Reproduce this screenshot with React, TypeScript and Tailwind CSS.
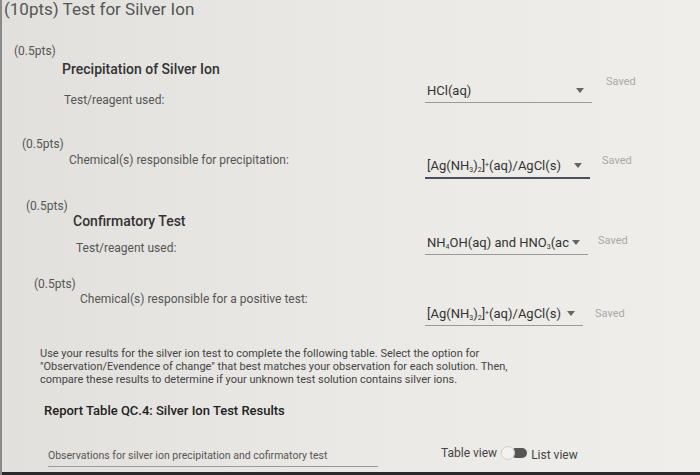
import React from 'react';

const Caret = () => (
  <svg width="8" height="5" viewBox="0 0 8 5" className="shrink-0">
    <path d="M0 0h8L4 5z" fill="#666" />
  </svg>
);

type DropProps = {
  children: React.ReactNode;
  width: string;
  strong?: boolean;
};

const Dropdown = ({ children, width, strong }: DropProps) => (
  <div
    className={`${width} flex items-center justify-between pl-[2px] pr-[8px] pb-[3px] ${
      strong ? 'border-b-2 border-[#4b4f58]' : 'border-b border-[#9a9a9a]'
    }`}
  >
    <span className="text-[13px] leading-[17px] text-[#333] whitespace-nowrap">{children}</span>
    <Caret />
  </div>
);

const Saved = ({ cls }: { cls: string }) => (
  <span className={`text-[11px] leading-[13px] text-[#a9a9a9] ${cls}`}>Saved</span>
);

const AgComplex = () => (
  <>
    [Ag(NH<sub className="text-[7px]">3</sub>)<sub className="text-[7px]">2</sub>]
    <sup className="text-[7px]">+</sup>(aq)/AgCl(s)
  </>
);

const App: React.FC = () => {
  return (
    <div
      className="w-[700px] h-[475px] overflow-hidden relative bg-linear-to-r from-[#e1e0dc] via-[#eae9e5] to-[#efeeea] border-l-2 border-[#8a8a8a] text-[#444]"
      style={{ fontFamily: 'Roboto, "Liberation Sans", sans-serif' }}
    >
      <h1 className="text-[17px] leading-[18px] text-[#555] pl-[2px]">(10pts) Test for Silver Ion</h1>

      {/* block 1 */}
      <div className="flex items-start mt-[26px]">
        <div className="w-[423px] shrink-0 pl-[12px]">
          <div className="text-[12px] leading-[14px] text-[#555]">(0.5pts)</div>
          <div className="ml-[48px] mt-[2px] text-[14px] leading-[18px] font-medium text-[#333]">
            Precipitation of Silver Ion
          </div>
          <div className="ml-[50px] mt-[15px] text-[12px] leading-[14px] text-[#555]">Test/reagent used:</div>
        </div>
        <div className="mt-[38px]">
          <Dropdown width="w-[167px]">HCl(aq)</Dropdown>
        </div>
        <Saved cls="ml-[14px] mt-[31px]" />
      </div>

      {/* block 2 */}
      <div className="flex items-start mt-[30px]">
        <div className="w-[423px] shrink-0 pl-[20px]">
          <div className="text-[12px] leading-[14px] text-[#555]">(0.5pts)</div>
          <div className="ml-[47px] mt-[2px] text-[12px] leading-[14px] text-[#555]">
            Chemical(s) responsible for precipitation:
          </div>
        </div>
        <div className="mt-[20px]">
          <Dropdown width="w-[165px]" strong>
            <AgComplex />
          </Dropdown>
        </div>
        <Saved cls="ml-[12px] mt-[17px]" />
      </div>

      {/* block 3 */}
      <div className="flex items-start mt-[20px]">
        <div className="w-[423px] shrink-0 pl-[24px]">
          <div className="text-[12px] leading-[14px] text-[#555]">(0.5pts)</div>
          <div className="ml-[47px] mt-[-1px] text-[14px] leading-[18px] font-medium text-[#333]">Confirmatory Test</div>
          <div className="ml-[50px] mt-[11px] text-[12px] leading-[14px] text-[#555]">Test/reagent used:</div>
        </div>
        <div className="mt-[35px]">
          <Dropdown width="w-[163px]">
            NH<sub className="text-[7px]">4</sub>OH(aq) and HNO<sub className="text-[7px]">3</sub>(ac
          </Dropdown>
        </div>
        <Saved cls="ml-[10px] mt-[35px]" />
      </div>

      {/* block 4 */}
      <div className="flex items-start mt-[22px]">
        <div className="w-[423px] shrink-0 pl-[32px]">
          <div className="text-[12px] leading-[14px] text-[#555]">(0.5pts)</div>
          <div className="ml-[46px] mt-[1px] text-[12px] leading-[14px] text-[#555]">
            Chemical(s) responsible for a positive test:
          </div>
        </div>
        <div className="mt-[28px]">
          <Dropdown width="w-[158px]">
            <AgComplex />
          </Dropdown>
        </div>
        <Saved cls="ml-[12px] mt-[30px]" />
      </div>

      {/* instructions */}
      <p className="ml-[38px] mt-[21px] text-[11px] leading-[13px] text-[#444]">
        Use your results for the silver ion test to complete the following table. Select the option for
        <br />
        "Observation/Evendence of change" that best matches your observation for each solution. Then,
        <br />
        compare these results to determine if your unknown test solution contains silver ions.
      </p>
      <h2 className="ml-[42px] mt-[17px] text-[13px] leading-[16px] font-medium text-[#222]">
        Report Table QC.4: Silver Ion Test Results
      </h2>

      <div className="flex items-start mt-[25px]">
        <div className="ml-[46px] w-[330px] border-b border-[#9a9a9a] pb-[4px] mt-[5px] text-[10.5px] leading-[13px] text-[#555]">
          Observations for silver ion precipitation and cofirmatory test
        </div>
        <div className="ml-[63px] flex items-center text-[12px] leading-[14px] text-[#444]">
          <span>Table view</span>
          <span className="relative ml-[2px] w-[30px] h-[14px] flex items-center">
            <span className="absolute left-[12px] w-[16px] h-[10px] rounded-full bg-[#555]" />
            <span className="absolute left-[2px] w-[14px] h-[14px] rounded-full bg-[#f2f2f0] border border-[#cfcfcf]" />
          </span>
          <span className="ml-[2px] mt-[4px]">List view</span>
        </div>
      </div>

      <div className="absolute left-0 right-0 bottom-0 h-[3px] bg-[#2a2a2a]" />
    </div>
  );
};

export default App;
